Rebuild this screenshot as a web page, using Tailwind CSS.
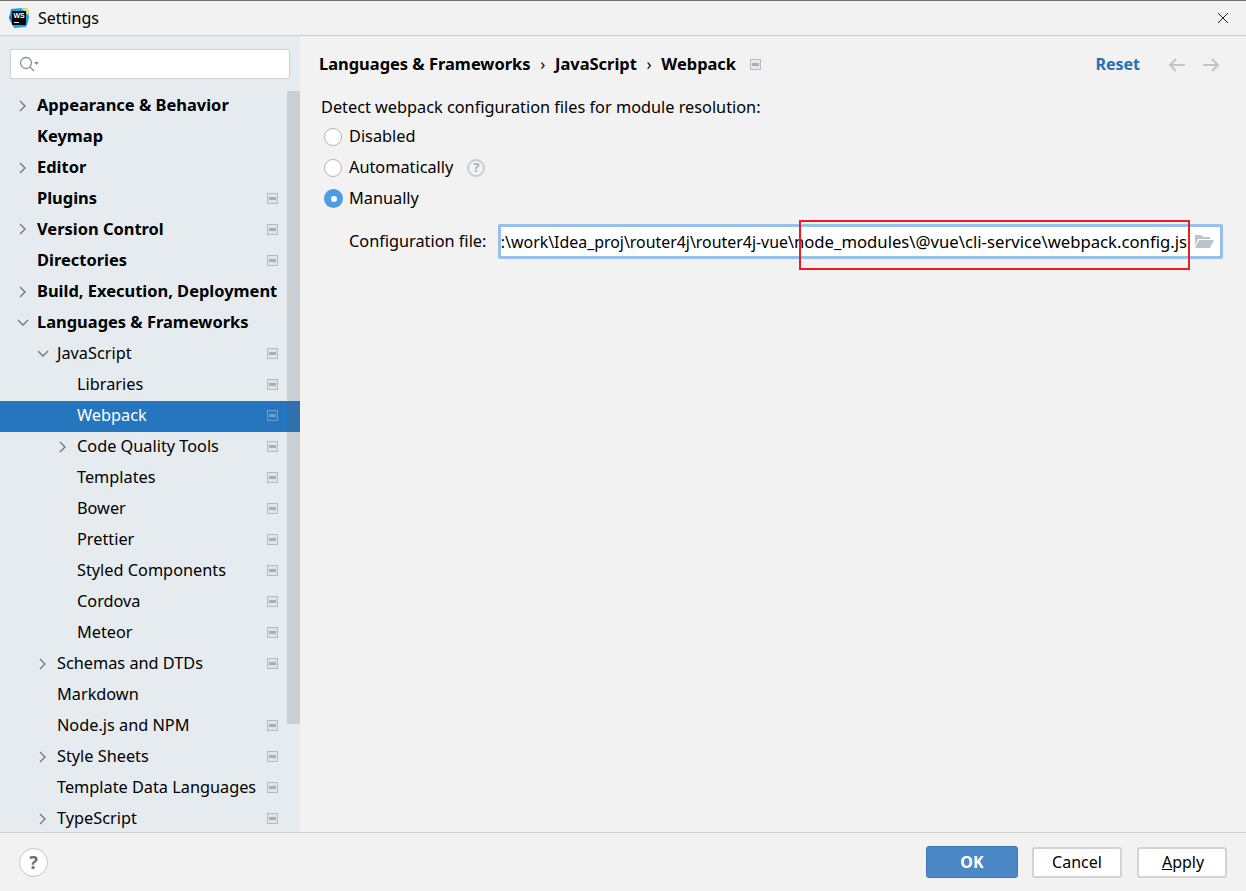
<!doctype html>
<html><head><meta charset="utf-8"><script src="https://cdn.jsdelivr.net/npm/@tailwindcss/browser@4"></script></head>
<body class="m-0 overflow-hidden">
<div class="flex h-[891px] w-[1246px] flex-col overflow-hidden bg-[#f2f2f2] font-['Noto_Sans','Open_Sans',sans-serif] text-[16.3px] text-black">
  <header class="flex h-9 shrink-0 items-center justify-between border-t border-b border-t-[#6e6e6e] border-b-[#cfcfcf] pl-[9px] pr-[18px]">
    <div class="flex items-center gap-[9px]">
      <svg width="20" height="20" viewBox="0 0 20 20"><path d="M2 1 L12 0 L19 1 L20 8 L19 14 L17 19 L5 20 L0 10Z" fill="#16a3ee"/><path d="M12 0 L19 1 L20 8 L17 5Z" fill="#e8e34c"/><path d="M0 10 L3 4 L3 16Z" fill="#2f6fe0"/><rect x="3" y="3" width="14" height="14" fill="#000"/><text x="4.500" y="10" font-size="7" font-weight="700" fill="#fff" font-family="Liberation Sans, sans-serif">WS</text><rect x="5" y="14" width="5" height="1" fill="#fff"/></svg>
      <span class="text-[16px]">Settings</span>
    </div>
    <svg width="10" height="10" viewBox="0 0 10 10" stroke="#222" stroke-width="1" fill="none"><path d="M0 0 L10 10 M10 0 L0 10"/></svg>
  </header>
  <main class="flex min-h-0 flex-1">
    <aside class="relative w-[300px] shrink-0 overflow-hidden bg-[#e6ebf0]">
      <div class="px-[10px] pt-[13px] pb-[12px]">
        <div class="flex h-[30px] items-center rounded-[2px] border border-[#cfcfcf] bg-white pl-2">
          <svg width="20" height="18" viewBox="0 0 20 18" fill="none" stroke="#8a9096" stroke-width="1.3"><circle cx="7" cy="8" r="5.5"/><path d="M11 12 L15 16"/><path d="M15 7 h5 l-2.500 3z" fill="#8a9096" stroke="none"/></svg>
        </div>
      </div>
      <nav class="font-normal">
        <div class="flex h-[31px] items-center pb-[2px] pl-[18px]"><svg class="w-[19px]" width="10" height="12" viewBox="0 0 19 12" fill="none" stroke="#777" stroke-width="1.400"><path d="M2 1 L7 6 L2 11"/></svg><span class="text-[16.45px] font-bold">Appearance &amp; Behavior</span></div>
        <div class="flex h-[31px] items-center pb-[2px] pl-[37px]"><span class="text-[16.45px] font-bold">Keymap</span></div>
        <div class="flex h-[31px] items-center pb-[2px] pl-[18px]"><svg class="w-[19px]" width="10" height="12" viewBox="0 0 19 12" fill="none" stroke="#777" stroke-width="1.400"><path d="M2 1 L7 6 L2 11"/></svg><span class="text-[16.45px] font-bold">Editor</span></div>
        <div class="flex h-[31px] items-center justify-between pb-[2px] pl-[37px] pr-[22px]"><span class="text-[16.45px] font-bold">Plugins</span><svg width="11" height="11" viewBox="0 0 11 11"><rect x=".5" y=".5" width="10" height="10" fill="#dfe4e8" stroke="#b4bcc2"/><rect x="2" y="4" width="7" height="3" fill="#a8b0b6"/></svg></div>
        <div class="flex h-[31px] items-center justify-between pb-[2px] pl-[18px] pr-[22px]"><div class="flex items-center"><svg class="w-[19px]" width="10" height="12" viewBox="0 0 19 12" fill="none" stroke="#777" stroke-width="1.400"><path d="M2 1 L7 6 L2 11"/></svg><span class="text-[16.45px] font-bold">Version Control</span></div><svg width="11" height="11" viewBox="0 0 11 11"><rect x=".5" y=".5" width="10" height="10" fill="#dfe4e8" stroke="#b4bcc2"/><rect x="2" y="4" width="7" height="3" fill="#a8b0b6"/></svg></div>
        <div class="flex h-[31px] items-center justify-between pb-[2px] pl-[37px] pr-[22px]"><span class="text-[16.45px] font-bold">Directories</span><svg width="11" height="11" viewBox="0 0 11 11"><rect x=".5" y=".5" width="10" height="10" fill="#dfe4e8" stroke="#b4bcc2"/><rect x="2" y="4" width="7" height="3" fill="#a8b0b6"/></svg></div>
        <div class="flex h-[31px] items-center pb-[2px] pl-[18px]"><svg class="w-[19px]" width="10" height="12" viewBox="0 0 19 12" fill="none" stroke="#777" stroke-width="1.400"><path d="M2 1 L7 6 L2 11"/></svg><span class="text-[16.45px] font-bold">Build, Execution, Deployment</span></div>
        <div class="flex h-[31px] items-center pb-[2px] pl-[18px]"><svg class="w-[19px]" width="12" height="10" viewBox="0 0 19 10" fill="none" stroke="#777" stroke-width="1.400"><path d="M0 2 L5 7 L10 2"/></svg><span class="text-[16.45px] font-bold">Languages &amp; Frameworks</span></div>
        <div class="flex h-[31px] items-center justify-between pb-[2px] pl-[38px] pr-[22px]"><div class="flex items-center"><svg class="w-[19px]" width="12" height="10" viewBox="0 0 19 10" fill="none" stroke="#777" stroke-width="1.400"><path d="M0 2 L5 7 L10 2"/></svg><span>JavaScript</span></div><svg width="11" height="11" viewBox="0 0 11 11"><rect x=".5" y=".5" width="10" height="10" fill="#dfe4e8" stroke="#b4bcc2"/><rect x="2" y="4" width="7" height="3" fill="#a8b0b6"/></svg></div>
        <div class="flex h-[31px] items-center justify-between pb-[2px] pl-[77px] pr-[22px]"><span>Libraries</span><svg width="11" height="11" viewBox="0 0 11 11"><rect x=".5" y=".5" width="10" height="10" fill="#dfe4e8" stroke="#b4bcc2"/><rect x="2" y="4" width="7" height="3" fill="#a8b0b6"/></svg></div>
        <div class="flex h-[31px] items-center justify-between bg-[#2675bf] pb-[2px] pl-[77px] pr-[22px] text-white"><span>Webpack</span><svg width="11" height="11" viewBox="0 0 11 11"><rect x=".5" y=".5" width="10" height="10" fill="#2f7abf" stroke="#6f9dc9"/><rect x="2" y="4" width="7" height="3" fill="#6f9dc9"/></svg></div>
        <div class="flex h-[31px] items-center justify-between pb-[2px] pl-[58px] pr-[22px]"><div class="flex items-center"><svg class="w-[19px]" width="10" height="12" viewBox="0 0 19 12" fill="none" stroke="#777" stroke-width="1.400"><path d="M2 1 L7 6 L2 11"/></svg><span>Code Quality Tools</span></div><svg width="11" height="11" viewBox="0 0 11 11"><rect x=".5" y=".5" width="10" height="10" fill="#dfe4e8" stroke="#b4bcc2"/><rect x="2" y="4" width="7" height="3" fill="#a8b0b6"/></svg></div>
        <div class="flex h-[31px] items-center justify-between pb-[2px] pl-[77px] pr-[22px]"><span>Templates</span><svg width="11" height="11" viewBox="0 0 11 11"><rect x=".5" y=".5" width="10" height="10" fill="#dfe4e8" stroke="#b4bcc2"/><rect x="2" y="4" width="7" height="3" fill="#a8b0b6"/></svg></div>
        <div class="flex h-[31px] items-center justify-between pb-[2px] pl-[77px] pr-[22px]"><span>Bower</span><svg width="11" height="11" viewBox="0 0 11 11"><rect x=".5" y=".5" width="10" height="10" fill="#dfe4e8" stroke="#b4bcc2"/><rect x="2" y="4" width="7" height="3" fill="#a8b0b6"/></svg></div>
        <div class="flex h-[31px] items-center justify-between pb-[2px] pl-[77px] pr-[22px]"><span>Prettier</span><svg width="11" height="11" viewBox="0 0 11 11"><rect x=".5" y=".5" width="10" height="10" fill="#dfe4e8" stroke="#b4bcc2"/><rect x="2" y="4" width="7" height="3" fill="#a8b0b6"/></svg></div>
        <div class="flex h-[31px] items-center justify-between pb-[2px] pl-[77px] pr-[22px]"><span>Styled Components</span><svg width="11" height="11" viewBox="0 0 11 11"><rect x=".5" y=".5" width="10" height="10" fill="#dfe4e8" stroke="#b4bcc2"/><rect x="2" y="4" width="7" height="3" fill="#a8b0b6"/></svg></div>
        <div class="flex h-[31px] items-center justify-between pb-[2px] pl-[77px] pr-[22px]"><span>Cordova</span><svg width="11" height="11" viewBox="0 0 11 11"><rect x=".5" y=".5" width="10" height="10" fill="#dfe4e8" stroke="#b4bcc2"/><rect x="2" y="4" width="7" height="3" fill="#a8b0b6"/></svg></div>
        <div class="flex h-[31px] items-center justify-between pb-[2px] pl-[77px] pr-[22px]"><span>Meteor</span><svg width="11" height="11" viewBox="0 0 11 11"><rect x=".5" y=".5" width="10" height="10" fill="#dfe4e8" stroke="#b4bcc2"/><rect x="2" y="4" width="7" height="3" fill="#a8b0b6"/></svg></div>
        <div class="flex h-[31px] items-center justify-between pb-[2px] pl-[38px] pr-[22px]"><div class="flex items-center"><svg class="w-[19px]" width="10" height="12" viewBox="0 0 19 12" fill="none" stroke="#777" stroke-width="1.400"><path d="M2 1 L7 6 L2 11"/></svg><span>Schemas and DTDs</span></div><svg width="11" height="11" viewBox="0 0 11 11"><rect x=".5" y=".5" width="10" height="10" fill="#dfe4e8" stroke="#b4bcc2"/><rect x="2" y="4" width="7" height="3" fill="#a8b0b6"/></svg></div>
        <div class="flex h-[31px] items-center pb-[2px] pl-[57px]"><span>Markdown</span></div>
        <div class="flex h-[31px] items-center justify-between pb-[2px] pl-[57px] pr-[22px]"><span>Node.js and NPM</span><svg width="11" height="11" viewBox="0 0 11 11"><rect x=".5" y=".5" width="10" height="10" fill="#dfe4e8" stroke="#b4bcc2"/><rect x="2" y="4" width="7" height="3" fill="#a8b0b6"/></svg></div>
        <div class="flex h-[31px] items-center justify-between pb-[2px] pl-[38px] pr-[22px]"><div class="flex items-center"><svg class="w-[19px]" width="10" height="12" viewBox="0 0 19 12" fill="none" stroke="#777" stroke-width="1.400"><path d="M2 1 L7 6 L2 11"/></svg><span>Style Sheets</span></div><svg width="11" height="11" viewBox="0 0 11 11"><rect x=".5" y=".5" width="10" height="10" fill="#dfe4e8" stroke="#b4bcc2"/><rect x="2" y="4" width="7" height="3" fill="#a8b0b6"/></svg></div>
        <div class="flex h-[31px] items-center justify-between pb-[2px] pl-[57px] pr-[22px]"><span>Template Data Languages</span><svg width="11" height="11" viewBox="0 0 11 11"><rect x=".5" y=".5" width="10" height="10" fill="#dfe4e8" stroke="#b4bcc2"/><rect x="2" y="4" width="7" height="3" fill="#a8b0b6"/></svg></div>
        <div class="flex h-[31px] items-center justify-between pb-[2px] pl-[38px] pr-[22px]"><div class="flex items-center"><svg class="w-[19px]" width="10" height="12" viewBox="0 0 19 12" fill="none" stroke="#777" stroke-width="1.400"><path d="M2 1 L7 6 L2 11"/></svg><span>TypeScript</span></div><svg width="11" height="11" viewBox="0 0 11 11"><rect x=".5" y=".5" width="10" height="10" fill="#dfe4e8" stroke="#b4bcc2"/><rect x="2" y="4" width="7" height="3" fill="#a8b0b6"/></svg></div>
      </nav>
      <div class="absolute top-[55px] right-0 h-[633px] w-[13px] bg-[#5a6066]/20"></div>
    </aside>
    <section class="min-w-0 flex-1 pl-[19px] pr-[23px]">
      <div class="flex h-[56px] items-center justify-between pt-[1px] pr-[3px]">
        <div class="flex items-center text-[16.45px] font-bold">
          <span>Languages &amp; Frameworks</span><span class="w-[24.5px] text-center font-normal">›</span><span>JavaScript</span><span class="w-[24.5px] text-center font-normal">›</span><span>Webpack</span>
          <svg class="ml-[14px]" width="11" height="11" viewBox="0 0 11 11"><rect x=".5" y=".5" width="10" height="10" fill="#e6e9ec" stroke="#b4bcc2"/><rect x="2" y="4" width="7" height="3" fill="#a8b0b6"/></svg>
        </div>
        <div class="flex items-center">
          <span class="-mt-[2px] text-[16px] font-bold text-[#2470b3]">Reset</span>
          <svg class="ml-[28px]" width="18" height="14" viewBox="0 0 18 14" fill="none" stroke="#c4c4c4" stroke-width="2"><path d="M17 7 H2 M8 1 L2 7 L8 13"/></svg>
          <svg class="ml-[16px]" width="18" height="14" viewBox="0 0 18 14" fill="none" stroke="#c4c4c4" stroke-width="2"><path d="M1 7 H16 M10 1 L16 7 L10 13"/></svg>
        </div>
      </div>
      <div class="pl-[2px]">
        <p class="-mb-[2px] flex h-[31px] items-center">Detect webpack configuration files for module resolution:</p>
        <label class="flex h-[31px] items-center"><span class="ml-[3px] h-[18px] w-[18px] rounded-full border border-[#b5b5b5] bg-white"></span><span class="ml-[7px]">Disabled</span></label>
        <label class="flex h-[31px] items-center"><span class="ml-[3px] h-[18px] w-[18px] rounded-full border border-[#b5b5b5] bg-white"></span><span class="ml-[7px]">Automatically</span><span class="ml-[14px] flex h-[18px] w-[18px] items-center justify-center rounded-full border-2 border-[#c9cdd0] text-[13px] font-bold text-[#a8adb1]">?</span></label>
        <label class="flex h-[31px] items-center"><span class="ml-[3px] flex h-[19px] w-[19px] items-center justify-center rounded-full bg-[#4c9be5]"><span class="h-[6px] w-[6px] rounded-full bg-white"></span></span><span class="ml-[6px]">Manually</span></label>
        <div class="mt-[10px] flex items-center pl-[28px]">
          <span class="w-[149px] shrink-0">Configuration file:</span>
          <div class="relative flex h-[35px] w-[725px] items-center rounded-[2px] border-[3px] border-[#97c0ed] bg-white">
            <div class="flex min-w-0 flex-1 justify-end overflow-hidden pl-[6px] whitespace-nowrap"><span class="shrink-0"><span class="text-[15.9px]">D:\work\Idea_proj\router4j\router4j-vue\</span><span class="text-[16.7px]">node_modules\@vue\cli-service\webpack.config.js</span></span></div>
            <svg class="ml-[7px] mr-[6px] shrink-0" width="20" height="15" viewBox="0 0 20 15" fill="#bcc3c9"><path d="M1 1 H7 L9 3 H16 V5 H4 L1 12Z"/><path d="M5 6 H20 L16 14 H1Z"/></svg>
            <div class="absolute top-[-7px] left-[298px] h-[50px] w-[391px] border-2 border-[#ed1c24]"></div>
          </div>
        </div>
      </div>
    </section>
  </main>
  <footer class="flex h-[59px] shrink-0 items-center justify-between border-t border-[#d0d0d0] pr-[19px] pl-[19px]">
    <span class="flex h-[29px] w-[29px] items-center justify-center rounded-full border border-[#c4c4c4] bg-white text-[18px] font-bold text-[#6e6e6e]">?</span>
    <div class="flex items-center gap-[15px] text-[16px]">
      <button class="mr-[-1px] h-[32px] w-[92px] rounded-[3px] border border-[#3f78b5] bg-[#4c88c8] font-bold text-white">OK</button>
      <button class="h-[31px] w-[90px] rounded-[3px] border-2 border-[#d3d3d3] bg-white">Cancel</button>
      <button class="h-[31px] w-[90px] rounded-[3px] border-2 border-[#d3d3d3] bg-white pl-[2px]"><u>A</u>pply</button>
    </div>
  </footer>
</div>
</body></html>
